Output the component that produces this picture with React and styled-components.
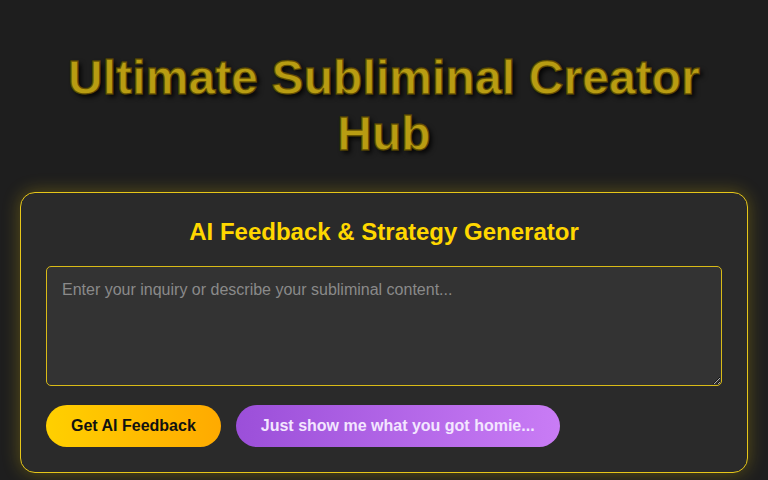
import React from "react";
import styled, { createGlobalStyle } from "styled-components";

const GlobalStyle = createGlobalStyle`
  * {
    box-sizing: border-box;
  }

  body {
    margin: 0;
    padding: 20px;
    background: #1e1e1e;
    font-family: "Liberation Sans", Arial, sans-serif;
    color: #f0f0f0;
  }
`;

const Title = styled.h1`
  margin: 30px 0;
  text-align: center;
  font-size: 48px;
  line-height: 56px;
  font-weight: 700;
  letter-spacing: 0.1px;
  color: #b89c12;
  -webkit-text-stroke: 1.4px rgba(92, 74, 0, 0.85);
  text-shadow: 3px 3px 5px rgba(0, 0, 0, 0.9);
`;

const Card = styled.section`
  background: #2a2a2a;
  border: 1px solid #e6c619;
  border-radius: 15px;
  padding: 25px;
  box-shadow: 0 0 18px rgba(255, 215, 0, 0.28);
`;

const Heading = styled.h2`
  margin: 0 0 20px;
  text-align: center;
  font-size: 24px;
  line-height: 28px;
  font-weight: 700;
  color: #ffd700;
`;

const Inquiry = styled.textarea`
  display: block;
  width: 100%;
  height: 120px;
  padding: 14px 15px;
  background: #333333;
  border: 1px solid #d9bb17;
  border-radius: 5px;
  color: #eeeeee;
  font-family: "Liberation Sans", Arial, sans-serif;
  font-size: 16px;
  outline: none;

  &::placeholder {
    color: #8a8a8a;
  }
`;

const Actions = styled.div`
  display: flex;
  gap: 15px;
  margin-top: 19px;
`;

const Pill = styled.button`
  height: 42px;
  padding: 0 25px;
  border: none;
  border-radius: 21px;
  font-family: "Liberation Sans", Arial, sans-serif;
  font-size: 16px;
  font-weight: 700;
  cursor: pointer;
  color: ${(p) => (p.$tone === "purple" ? "#f3e6ff" : "#111111")};
  background: ${(p) =>
    p.$tone === "purple"
      ? "linear-gradient(90deg, #9b4fd9, #c97cf5)"
      : "linear-gradient(90deg, #ffd000, #ffaa00)"};
`;

export default function App() {
  return (
    <>
      <GlobalStyle />
      <Title>Ultimate Subliminal Creator Hub</Title>
      <Card>
        <Heading>AI Feedback &amp; Strategy Generator</Heading>
        <Inquiry placeholder="Enter your inquiry or describe your subliminal content..." />
        <Actions>
          <Pill $tone="gold">Get AI Feedback</Pill>
          <Pill $tone="purple">Just show me what you got homie...</Pill>
        </Actions>
      </Card>
    </>
  );
}
